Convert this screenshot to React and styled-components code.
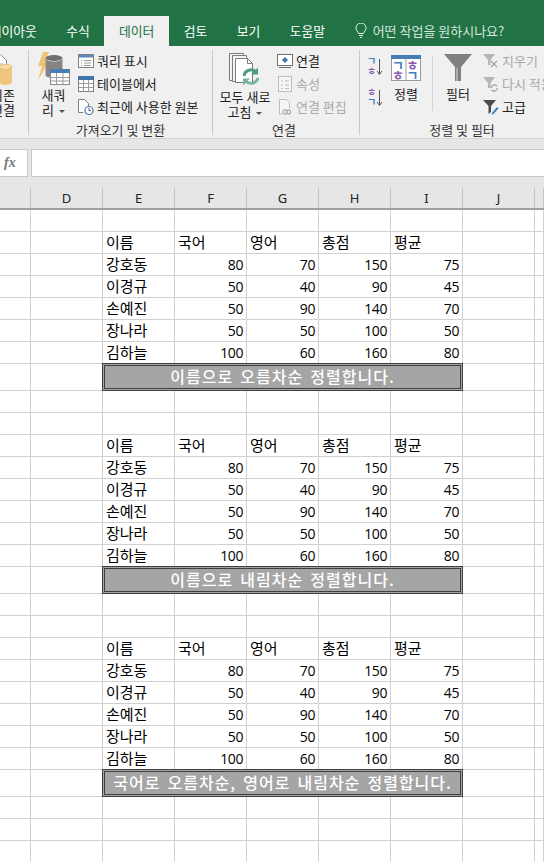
import React from 'react'
import styled, { createGlobalStyle } from 'styled-components'

const GlobalStyle = createGlobalStyle`
  html, body {
    margin: 0;
    padding: 0;
    background: #fff;
    overflow: hidden;
  }
  body {
    font-family: "Noto Sans CJK KR", "Noto Sans", sans-serif;
  }
`

const Container = styled.div`
  width: 544px;
  height: 862px;
  overflow: hidden;
  display: flex;
  flex-direction: column;
`

const TabBar = styled.div`
  height: 46px;
  flex: none;
  background: #217346;
  display: flex;
  align-items: flex-end;
  margin-left: -25px;
  width: 580px;
`

const Tab = styled.div`
  height: 30px;
  box-sizing: border-box;
  padding: 0 14.7px 2px;
  display: flex;
  align-items: center;
  font-size: 12.8px;
  white-space: nowrap;
  color: ${props => props.$active ? '#217346' : '#fff'};
  background: ${props => props.$active ? '#f0f0f0' : 'transparent'};
`

const Search = styled.div`
  height: 30px;
  box-sizing: border-box;
  padding-bottom: 2px;
  margin-left: 15px;
  display: flex;
  align-items: center;
  gap: 6px;
  font-size: 13px;
  white-space: nowrap;
  color: #d6e6dd;
`

const Ribbon = styled.div`
  height: 93px;
  flex: none;
  box-sizing: border-box;
  background: #f0f0f0;
  border-bottom: 1px solid #d4d4d4;
  display: flex;
  overflow: hidden;
  padding-top: 4px;
`

const Group = styled.div`
  width: ${props => props.$width}px;
  flex: none;
  height: 85px;
  box-sizing: border-box;
  border-right: ${props => props.$last ? 'none' : '1px solid #c9c9c9'};
  display: flex;
  flex-direction: column;
`

const GroupBody = styled.div`
  height: 73px;
  flex: none;
  display: flex;
`

const GroupLabel = styled.div`
  font-size: 13px;
  line-height: 14px;
  color: #333;
  white-space: nowrap;
  text-align: center;
  transform: translateX(${props => props.$shift || 0}px);
`

const BigButton = styled.div`
  width: ${props => props.$width}px;
  margin-left: ${props => props.$offset || 0}px;
  flex: none;
  display: flex;
  flex-direction: column;
  align-items: center;
  padding-top: ${props => props.$top || 2}px;
  font-size: 13px;
  line-height: 15px;
  color: #222;
  white-space: nowrap;
`

const BigLabel = styled.div`
  text-align: center;
  margin-top: ${props => props.$gap || 2}px;
`

const Caret = styled.span`
  display: inline-block;
  width: 0;
  height: 0;
  margin-left: 5px;
  vertical-align: 2px;
  border-left: 3px solid transparent;
  border-right: 3px solid transparent;
  border-top: 3px solid #555;
`

const SmallList = styled.div`
  display: flex;
  flex-direction: column;
  flex: none;
  margin-top: -1px;
`

const SmallRow = styled.div`
  height: 23px;
  display: flex;
  align-items: center;
  gap: 3px;
  font-size: 13px;
  white-space: nowrap;
  color: ${props => props.$disabled ? '#a9a9a9' : '#222'};
  svg {
    flex: none;
  }
`

const SortColumn = styled.div`
  width: 16px;
  margin-left: 7px;
  flex: none;
  display: flex;
  flex-direction: column;
  gap: 9px;
  padding-top: 6px;
`

const InnerLine = styled.div`
  width: 1px;
  height: 55px;
  margin: 6px 0 0 3px;
  background: #d4d4d4;
  flex: none;
`

const FormulaBand = styled.div`
  height: 49px;
  flex: none;
  box-sizing: border-box;
  background: #e6e6e6;
  padding: 10px 0 11px;
  display: flex;
  gap: 3px;
`

const FxBox = styled.div`
  width: 28px;
  box-sizing: border-box;
  background: #fff;
  border: 1px solid #c8c8c8;
  border-left: none;
  padding-left: 4px;
  display: flex;
  align-items: center;
  font-family: "Liberation Serif", serif;
  font-style: italic;
  font-weight: 700;
  font-size: 14px;
  color: #777;
`

const FormulaInput = styled.div`
  flex: 1;
  background: #fff;
  border: 1px solid #c8c8c8;
  border-right: none;
`

const gridColumns = '31px repeat(7, 72px) 1fr'

const HeaderRow = styled.div`
  height: 22px;
  flex: none;
  box-sizing: border-box;
  display: grid;
  grid-template-columns: ${gridColumns};
  background: #e6e6e6;
  border-bottom: 2px solid #a0a0a0;
`

const HeaderCell = styled.div`
  display: flex;
  align-items: center;
  justify-content: center;
  box-sizing: border-box;
  border-right: 1px solid #c2c2c2;
  padding-bottom: 1px;
  font-family: "Noto Sans", sans-serif;
  font-size: 13px;
  color: #222;
`

const Row = styled.div`
  height: ${props => props.$height || 22}px;
  flex: none;
  box-sizing: border-box;
  display: grid;
  grid-template-columns: ${gridColumns};
  grid-template-rows: ${props => props.$height || 22}px;
  background: #fff;
`

const Cell = styled.div`
  box-sizing: border-box;
  border-right: 1px solid #d0d0d0;
  border-bottom: 1px solid #d0d0d0;
  display: flex;
  align-items: center;
  justify-content: ${props => props.$number ? 'flex-end' : 'flex-start'};
  padding: ${props => props.$number ? '0 3px 1px 0' : '0 0 3px 3px'};
  font-family: ${props => props.$number ? '"Open Sans", sans-serif' : '"Noto Sans CJK KR", sans-serif'};
  font-size: ${props => props.$number ? '14px' : '15px'};
  letter-spacing: ${props => props.$number ? '-0.4px' : '0'};
  color: #000;
  white-space: nowrap;
  overflow: hidden;
`

const Banner = styled.div`
  grid-column: span 5;
  box-sizing: border-box;
  margin: -1px 0 0 -1px;
  padding-bottom: 3px;
  border: 3px double #3f3f3f;
  background: #a5a5a5;
  display: flex;
  align-items: center;
  justify-content: center;
  color: #fff;
  font-size: 16px;
  line-height: 18px;
  font-weight: 500;
  white-space: nowrap;
  letter-spacing: 1px;
  word-spacing: 2.5px;
`

const BoltDbIcon = () => (
  <svg width="34" height="33" viewBox="0 0 34 33">
    <path d="M6 0h6L8 10h4L1 28l4-14H1z" fill="#f0c273" />
    <ellipse cx="17" cy="6" rx="8.5" ry="3" fill="#6f6f6f" />
    <path d="M8.5 6v17c0 2 4 3 8.5 3s8.5-1 8.5-3V6c0 2-4 3.5-8.5 3.5S8.5 8 8.5 6z" fill="#858585" />
    <rect x="13.5" y="17.5" width="19" height="15" fill="#fff" stroke="#8a8a8a" />
    <rect x="13" y="17" width="20" height="4" fill="#4a7db5" />
    <path d="M19.5 21v11M26 21v11M14 25.5h18M14 29h18" stroke="#9a9a9a" />
  </svg>
)

const DocDbIcon = () => (
  <svg width="24" height="33" viewBox="0 0 24 33">
    <path d="M.5 2.5h9l6 6v20H.5z" fill="#fff" stroke="#8f8f8f" />
    <path d="M3 12h9M3 16h7M3 20h7M3 24h7" stroke="#a8a8a8" />
    <path d="M8 15v15c0 2 3 3 6.5 3s6.500-1 6.500-3V15z" fill="#f0c67e" />
    <ellipse cx="14.500" cy="15" rx="6.500" ry="2.500" fill="#f6dca9" stroke="#e9bc6e" />
  </svg>
)

const RefreshAllIcon = () => (
  <svg width="32" height="33" viewBox="0 0 32 33">
    <path d="M.5.500h14v27H.5z" fill="#f4f4f4" stroke="#7c7c7c" />
    <path d="M3.500 2.500h14v26h-14z" fill="#f4f4f4" stroke="#7c7c7c" />
    <path d="M6.500 5.500h12l5 5v19h-17z" fill="#fff" stroke="#7c7c7c" />
    <path d="M18.500 5.500v5h5" fill="none" stroke="#7c7c7c" />
    <path d="M15 23a7 7 0 0 1 12-4" fill="none" stroke="#4f9d7e" strokeWidth="3" />
    <path d="M29 14.500v7h-7z" fill="#4f9d7e" />
    <path d="M29 25a7 7 0 0 1-12 3" fill="none" stroke="#78b69c" strokeWidth="3" />
    <path d="M14 32.500v-7h7z" fill="#78b69c" />
  </svg>
)

const SortGlyph = styled.svg`
  overflow: visible;
  font-family: "Noto Sans CJK KR", sans-serif;
  font-weight: 700;
`

const SortSmallIcon = ({ top, bottom, topColor, bottomColor }) => (
  <SortGlyph width="17" height="22" viewBox="0 0 17 22" fontSize="10">
    <text x="0" y="9" fill={topColor}>{top}</text>
    <text x="0" y="19" fill={bottomColor}>{bottom}</text>
    <path d="M12.500 3v15M10 15l2.500 3.500 2.500-3.500" fill="none" stroke="#555" />
  </SortGlyph>
)

const SortBigIcon = () => (
  <SortGlyph width="30" height="26" viewBox="0 0 30 26" fontSize="13">
    <rect x=".5" y=".5" width="29" height="25" fill="#fff" stroke="#9a9a9a" />
    <rect x="0" y="0" width="30" height="4" fill="#4a7db5" />
    <path d="M15 4v22" stroke="#9a9a9a" />
    <text x="1" y="14.500" fill="#3f7fc0">ㄱ</text>
    <text x="1" y="24.500" fill="#8a5cae">ㅎ</text>
    <text x="15.500" y="14.500" fill="#8a5cae">ㅎ</text>
    <text x="15.500" y="24.500" fill="#3f7fc0">ㄱ</text>
  </SortGlyph>
)

const FunnelIcon = () => (
  <svg width="28" height="27" viewBox="0 0 28 27">
    <path d="M0 0h28L17 13v14h-6V13z" fill="#808080" />
    <path d="M13 14v13" stroke="#d8d8d8" />
  </svg>
)

const WindowIcon = () => (
  <svg width="16" height="16" viewBox="0 0 16 16">
    <rect x=".5" y="1.500" width="15" height="13" fill="#fff" stroke="#808080" />
    <rect x="1" y="2" width="14" height="2.500" fill="#5a8cc0" />
    <path d="M6 7.500h7M6 10h7M6 12.500h7M3 7.500h1M3 10h1M3 12.500h1" stroke="#9c9c9c" />
  </svg>
)

const TableIcon = () => (
  <svg width="16" height="16" viewBox="0 0 16 16">
    <rect x=".5" y=".5" width="15" height="15" fill="#fff" stroke="#808080" />
    <rect x="0" y="0" width="16" height="4" fill="#3f74ad" />
    <path d="M5.500 4v12M10.500 4v12M1 7.500h14M1 11.500h14" stroke="#9c9c9c" />
  </svg>
)

const RecentIcon = () => (
  <svg width="16" height="16" viewBox="0 0 16 16">
    <path d="M5 13.500H.5V.5h6l4 4v3" fill="#fff" stroke="#808080" />
    <circle cx="11" cy="11.500" r="4" fill="#fff" stroke="#4a7db5" strokeWidth="1.200" />
    <path d="M11 9v2.700h2" fill="none" stroke="#555" />
  </svg>
)

const ConnectionIcon = () => (
  <svg width="16" height="16" viewBox="0 0 16 16">
    <rect x=".5" y="1.500" width="15" height="11" fill="#fff" stroke="#707070" />
    <path d="M2 14.500h12" stroke="#707070" />
    <path d="M8 4l3 3-3 3-3-3z" fill="#3f74ad" />
  </svg>
)

const PropertiesIcon = () => (
  <svg width="16" height="16" viewBox="0 0 16 16">
    <rect x="1.500" y=".5" width="13" height="15" fill="#f6f6f6" stroke="#bdbdbd" />
    <path d="M4 5h2M4 9h2M4 12.500h2M8 5h4M8 9h4M8 12.500h4" stroke="#bdbdbd" />
  </svg>
)

const LinkDocIcon = () => (
  <svg width="16" height="16" viewBox="0 0 16 16">
    <path d="M5 15H2.500V.5h7l3 3v6" fill="#f6f6f6" stroke="#bdbdbd" />
    <circle cx="8" cy="13" r="2" fill="none" stroke="#b0b0b0" strokeWidth="1.300" />
    <circle cx="11.500" cy="13" r="2" fill="none" stroke="#b0b0b0" strokeWidth="1.300" />
  </svg>
)

const ClearIcon = () => (
  <svg width="16" height="16" viewBox="0 0 16 16">
    <path d="M0 1h12L7.500 7v5H5V7z" fill="#b5b5b5" />
    <path d="M8 8l6 6M14 8l-6 6" stroke="#a0a0a0" strokeWidth="1.200" />
  </svg>
)

const ReapplyIcon = () => (
  <svg width="16" height="16" viewBox="0 0 16 16">
    <path d="M0 1h12L7.500 7v5H5V7z" fill="#b5b5b5" />
    <path d="M8 12a3.500 3.500 0 0 1 6-2M14.500 12a3.500 3.500 0 0 1-6 2" fill="none" stroke="#a0a0a0" strokeWidth="1.200" />
  </svg>
)

const AdvancedIcon = () => (
  <svg width="16" height="16" viewBox="0 0 16 16">
    <path d="M0 1h13L8 7v6l-2.500 2V7z" fill="#4d4d4d" />
    <path d="M9 14l5-6 1.500 1.500-5 5.500-2 .7z" fill="#3f7fc0" />
  </svg>
)

const BulbIcon = () => (
  <svg width="12" height="15" viewBox="0 0 12 15">
    <path d="M3.500 10.500C3 8.500 1 7.500 1 5a5 5 0 0 1 10 0c0 2.500-2 3.500-2.500 5.500z" fill="none" stroke="#e4efe9" />
    <path d="M4 12.500h4M5 14.500h2" stroke="#e4efe9" />
  </svg>
)

const columnNames = ['D', 'E', 'F', 'G', 'H', 'I', 'J']
const subjects = ['이름', '국어', '영어', '총점', '평균']
const students = [
  ['강호동', 80, 70, 150, 75],
  ['이경규', 50, 40, 90, 45],
  ['손예진', 50, 90, 140, 70],
  ['장나라', 50, 50, 100, 50],
  ['김하늘', 100, 60, 160, 80],
]
const tables = [
  '이름으로 오름차순 정렬합니다.',
  '이름으로 내림차순 정렬합니다.',
  '국어로 오름차순, 영어로 내림차순 정렬합니다.',
]

const BlankRow = () => (
  <Row>
    {Array.from({ length: 9 }, (_, i) => <Cell key={i} />)}
  </Row>
)

const SheetTable = ({ note }) => (
  <>
    <Row>
      <Cell />
      <Cell />
      {subjects.map(name => <Cell key={name}>{name}</Cell>)}
      <Cell />
      <Cell />
    </Row>
    {students.map(([name, ...scores]) => (
      <Row key={name}>
        <Cell />
        <Cell />
        <Cell>{name}</Cell>
        {scores.map((score, i) => <Cell key={i} $number>{score}</Cell>)}
        <Cell />
        <Cell />
      </Row>
    ))}
    <Row $height={27}>
      <Cell />
      <Cell />
      <Banner>{note}</Banner>
      <Cell />
      <Cell />
    </Row>
  </>
)

const App = () => {
  return (
    <Container>
      <GlobalStyle />
      <TabBar>
        <Tab>레이아웃</Tab>
        <Tab>수식</Tab>
        <Tab $active>데이터</Tab>
        <Tab>검토</Tab>
        <Tab>보기</Tab>
        <Tab>도움말</Tab>
        <Search>
          <BulbIcon />
          어떤 작업을 원하시나요?
        </Search>
      </TabBar>
      <Ribbon>
        <Group $width={29}>
          <GroupBody>
            <BigButton $width={50} $offset={-22}>
              <DocDbIcon />
              <BigLabel>기존<br />연결</BigLabel>
            </BigButton>
          </GroupBody>
        </Group>
        <Group $width={184}>
          <GroupBody>
            <BigButton $width={49}>
              <BoltDbIcon />
              <BigLabel>새쿼<br />리<Caret /></BigLabel>
            </BigButton>
            <SmallList>
              <SmallRow><WindowIcon />쿼리 표시</SmallRow>
              <SmallRow><TableIcon />테이블에서</SmallRow>
              <SmallRow><RecentIcon />최근에 사용한 원본</SmallRow>
            </SmallList>
          </GroupBody>
          <GroupLabel>가져오기 및 변환</GroupLabel>
        </Group>
        <Group $width={147}>
          <GroupBody>
            <BigButton $width={64} $top={3}>
              <RefreshAllIcon />
              <BigLabel $gap={3}>모두 새로<br />고침<Caret /></BigLabel>
            </BigButton>
            <SmallList>
              <SmallRow><ConnectionIcon />연결</SmallRow>
              <SmallRow $disabled><PropertiesIcon />속성</SmallRow>
              <SmallRow $disabled><LinkDocIcon />연결 편집</SmallRow>
            </SmallList>
          </GroupBody>
          <GroupLabel $shift={-2}>연결</GroupLabel>
        </Group>
        <Group $width={184} $last>
          <GroupBody>
            <SortColumn>
              <SortSmallIcon top="ㄱ" bottom="ㅎ" topColor="#3f7fc0" bottomColor="#8a5cae" />
              <SortSmallIcon top="ㅎ" bottom="ㄱ" topColor="#8a5cae" bottomColor="#3f7fc0" />
            </SortColumn>
            <BigButton $width={46} $top={5}>
              <SortBigIcon />
              <BigLabel $gap={5}>정렬</BigLabel>
            </BigButton>
            <InnerLine />
            <BigButton $width={50} $top={4}>
              <FunnelIcon />
              <BigLabel $gap={5}>필터</BigLabel>
            </BigButton>
            <SmallList>
              <SmallRow $disabled><ClearIcon />지우기</SmallRow>
              <SmallRow $disabled><ReapplyIcon />다시 적용</SmallRow>
              <SmallRow><AdvancedIcon />고급</SmallRow>
            </SmallList>
          </GroupBody>
          <GroupLabel $shift={10}>정렬 및 필터</GroupLabel>
        </Group>
      </Ribbon>
      <FormulaBand>
        <FxBox>fx</FxBox>
        <FormulaInput />
      </FormulaBand>
      <HeaderRow>
        <HeaderCell />
        {columnNames.map(name => <HeaderCell key={name}>{name}</HeaderCell>)}
        <HeaderCell />
      </HeaderRow>
      <BlankRow />
      <SheetTable note={tables[0]} />
      <BlankRow />
      <BlankRow />
      <SheetTable note={tables[1]} />
      <BlankRow />
      <BlankRow />
      <SheetTable note={tables[2]} />
      <BlankRow />
      <BlankRow />
      <BlankRow />
    </Container>
  )
}

export default App
